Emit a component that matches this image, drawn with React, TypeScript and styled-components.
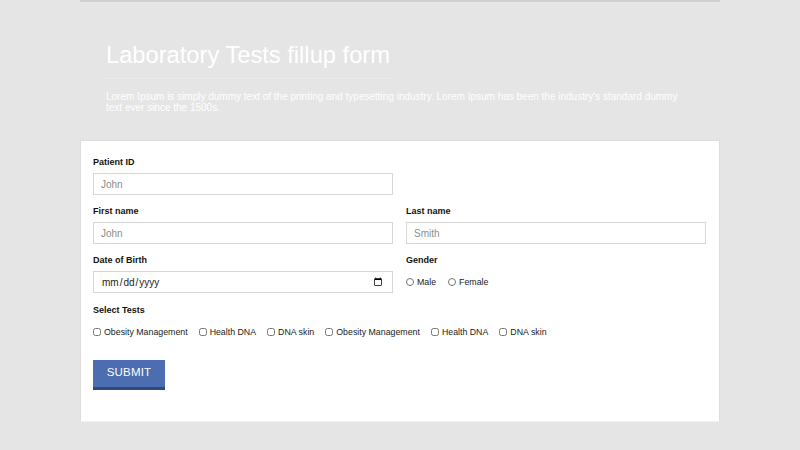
import React from 'react'
import styled, {createGlobalStyle} from 'styled-components'

const GlobalStyle = createGlobalStyle`
    html, body {
        margin: 0;
        padding: 0;
        background: #e5e5e5;
    }
    body {
        font-family: "Liberation Sans", Arial, sans-serif;
    }
    * {
        box-sizing: border-box;
    }
`

const Page = styled.div`
    width: 640px;
    margin: 0 auto;
    border-top: 2px solid #cfcfcf;
`

const Header = styled.header`
    padding: 39px 26px 27px;
    color: #ffffff;
`

const Title = styled.h1`
    display: inline-block;
    margin: 0;
    padding-bottom: 9px;
    font-size: 23.7px;
    line-height: 28px;
    font-weight: normal;
    border-bottom: 1px solid #ebebeb;
`

const Intro = styled.p`
    margin: 12px 0 0;
    font-size: 10px;
    line-height: 11px;
    color: #ffffff;
`

const Card = styled.form`
    background: #ffffff;
    border: 1px solid #dcdcdc;
    border-bottom-color: #f0f0f0;
    padding: 15px 12px 31px;
    display: flex;
    flex-direction: column;
    gap: 10px;
`

const Row = styled.div`
    display: grid;
    grid-template-columns: 300px 300px;
    column-gap: 13px;
`

const Field = styled.div`
    display: flex;
    flex-direction: column;
    gap: 4px;
`

const Label = styled.label`
    font-size: 9px;
    line-height: 13px;
    font-weight: bold;
    color: #111111;
`

const TextInput = styled.input`
    height: 22px;
    padding: 0 7px;
    border: 1px solid #d6d6d6;
    border-radius: 0;
    background: #ffffff;
    font-family: "Liberation Sans", Arial, sans-serif;
    font-size: 10px;
    color: #222222;
    outline: none;
    &::placeholder {
        color: #8c8c8c;
    }
`

const ChoiceRow = styled.div<{$spacing: number}>`
    height: 22px;
    display: flex;
    align-items: center;
    gap: ${props => props.$spacing}px;
`

const Choice = styled.label`
    display: flex;
    align-items: center;
    gap: 3px;
    font-size: 8.8px;
    color: #1a1a1a;
    input {
        width: 8px;
        height: 8px;
        margin: 0;
    }
`

const TestsField = styled(Field)`
    margin-top: 1px;
    gap: 6px;
`

const TestsRow = styled(ChoiceRow)`
    height: 18px;
    margin-bottom: 9px;
`

const SubmitButton = styled.button`
    align-self: flex-start;
    width: 72px;
    height: 30px;
    padding: 0 0 3px;
    border: none;
    border-bottom: 3px solid #33497a;
    background: #4c6db0;
    color: #ffffff;
    font-family: "Liberation Sans", Arial, sans-serif;
    font-size: 11.5px;
    letter-spacing: 0.2px;
    cursor: pointer;
`

const tests = ['Obesity Management', 'Health DNA', 'DNA skin', 'Obesity Management', 'Health DNA', 'DNA skin']

export default function App() {
    return (
        <>
            <GlobalStyle/>
            <Page>
                <Header>
                    <Title>Laboratory Tests fillup form</Title>
                    <Intro>Lorem Ipsum is simply dummy text of the printing and typesetting industry. Lorem Ipsum has
                        been the industry's standard dummy text ever since the 1500s.</Intro>
                </Header>
                <Card onSubmit={e => e.preventDefault()}>
                    <Row>
                        <Field>
                            <Label htmlFor="patient-id">Patient ID</Label>
                            <TextInput id="patient-id" placeholder="John"/>
                        </Field>
                    </Row>
                    <Row>
                        <Field>
                            <Label htmlFor="first-name">First name</Label>
                            <TextInput id="first-name" placeholder="John"/>
                        </Field>
                        <Field>
                            <Label htmlFor="last-name">Last name</Label>
                            <TextInput id="last-name" placeholder="Smith"/>
                        </Field>
                    </Row>
                    <Row>
                        <Field>
                            <Label htmlFor="dob">Date of Birth</Label>
                            <TextInput id="dob" type="date"/>
                        </Field>
                        <Field>
                            <Label>Gender</Label>
                            <ChoiceRow $spacing={12}>
                                <Choice><input type="radio" name="gender"/>Male</Choice>
                                <Choice><input type="radio" name="gender"/>Female</Choice>
                            </ChoiceRow>
                        </Field>
                    </Row>
                    <TestsField>
                        <Label>Select Tests</Label>
                        <TestsRow $spacing={11}>
                            {tests.map((test, i) => (
                                <Choice key={i}><input type="checkbox"/>{test}</Choice>
                            ))}
                        </TestsRow>
                    </TestsField>
                    <SubmitButton type="submit">SUBMIT</SubmitButton>
                </Card>
            </Page>
        </>
    )
}
